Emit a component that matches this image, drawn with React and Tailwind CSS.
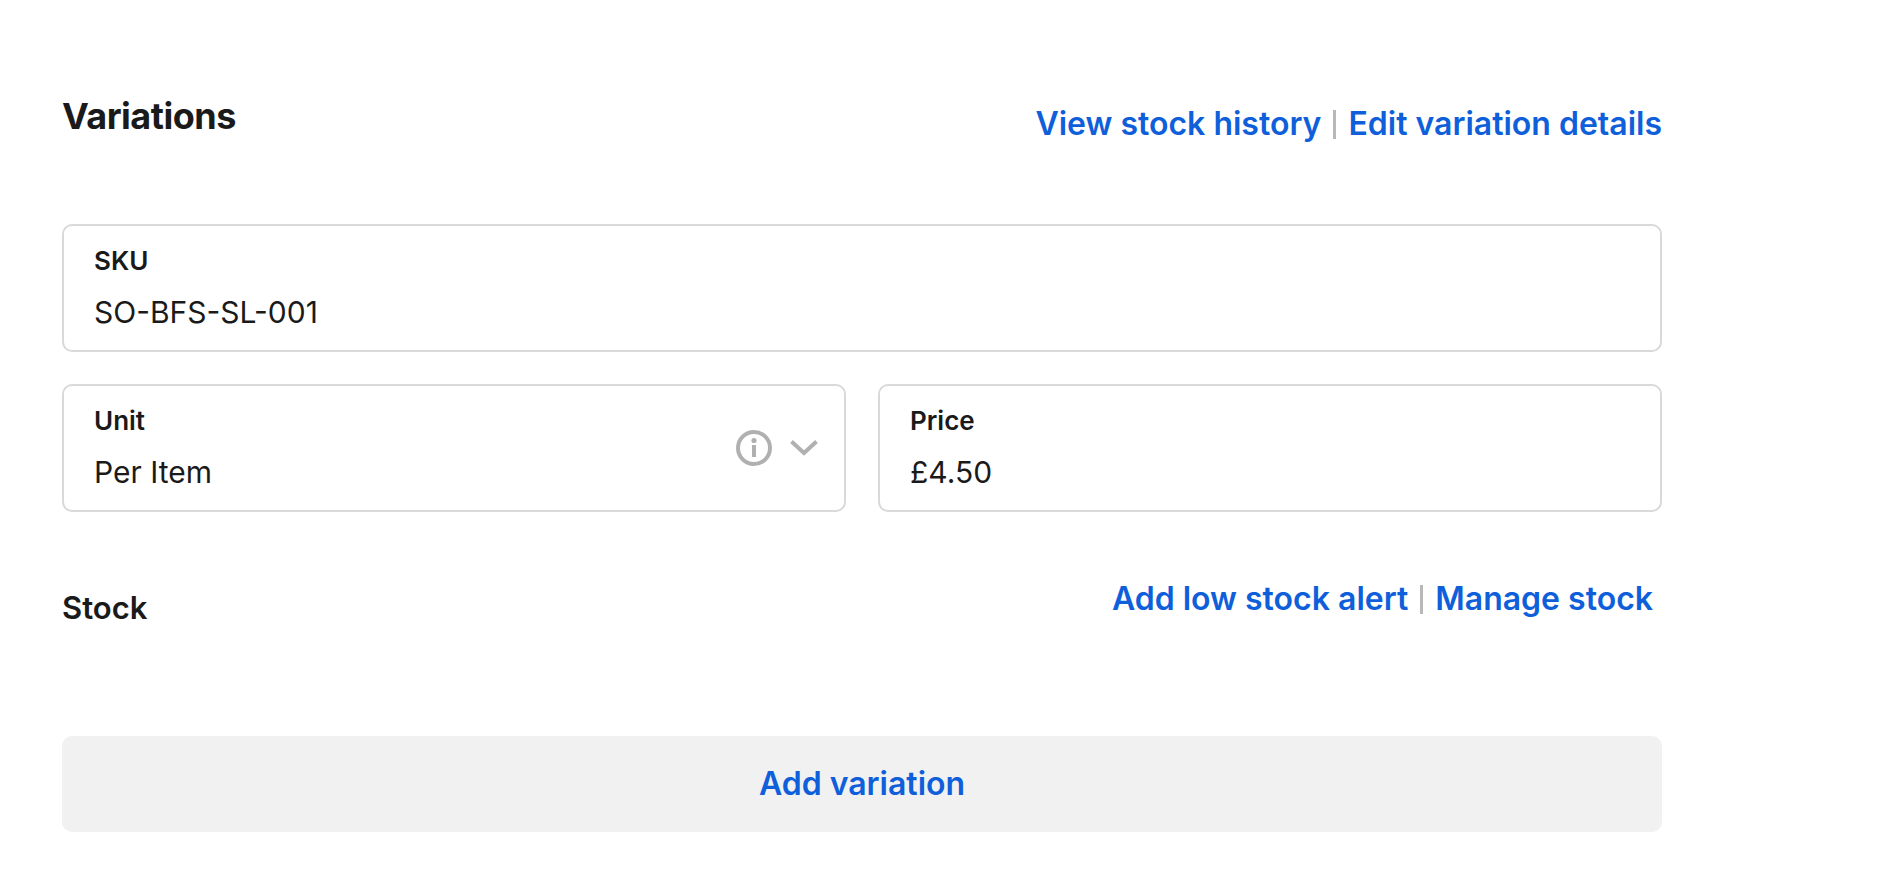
const FONT = "font-['Inter',sans-serif]";

const Field = ({ label, value, className = "", children }) => {
  return (
    <div
      className={`flex h-[128px] items-center justify-between rounded-[10px] border-2 border-[#d9d9d9] pl-[30px] pr-[26px] ${className}`}
    >
      <div className="flex flex-col pb-[4px]">
        <span className="text-[26px] leading-[36px] font-semibold text-[#1a1a1a]">
          {label}
        </span>
        <span className="mt-[15px] text-[30px] leading-[36px] text-[#1a1a1a]">
          {value}
        </span>
      </div>
      {children}
    </div>
  );
};

const InfoIcon = () => (
  <svg width="36" height="36" viewBox="0 0 36 36" fill="none">
    <circle cx="18" cy="18" r="16" stroke="#b0b0b0" strokeWidth="4" />
    <circle cx="18" cy="10.5" r="2.6" fill="#b0b0b0" />
    <rect x="16" y="15" width="4" height="12" fill="#b0b0b0" />
  </svg>
);

const ChevronIcon = () => (
  <svg width="28" height="18" viewBox="0 0 28 18" fill="none">
    <path d="M1.5 2.5 14 14 26.5 2.5" stroke="#b0b0b0" strokeWidth="4" />
  </svg>
);

const LinkPair = ({ first, second }) => (
  <div className="flex items-center text-[32px] leading-[40px] font-semibold text-[#0f5fdb]">
    <a href="#">{first}</a>
    <span className="mx-[12px] h-[29px] w-[3px] bg-[#b8b8b8]" />
    <a href="#">{second}</a>
  </div>
);

const App = () => {
  return (
    <div className={`h-[874px] bg-white pl-[62px] ${FONT}`}>
      <div className="w-[1600px] pt-[94px]">
        <div className="flex items-start justify-between">
          <h2 className="text-[36px] leading-[44px] font-bold tracking-[-0.5px] text-[#1a1a1a]">
            Variations
          </h2>
          <div className="mt-[10px]">
            <LinkPair first="View stock history" second="Edit variation details" />
          </div>
        </div>

        <Field label="SKU" value="SO-BFS-SL-001" className="mt-[80px]" />

        <div className="mt-[32px] grid grid-cols-[784px_784px] gap-[32px]">
          <Field label="Unit" value="Per Item">
            <div className="flex items-center gap-[18px]">
              <InfoIcon />
              <ChevronIcon />
            </div>
          </Field>
          <Field label="Price" value="£4.50" />
        </div>

        <div className="mt-[67px] flex items-start justify-between pr-[9px]">
          <span className="mt-[9px] text-[31px] leading-[40px] font-semibold text-[#1a1a1a]">
            Stock
          </span>
          <LinkPair first="Add low stock alert" second="Manage stock" />
        </div>

        <button
          type="button"
          className="mt-[108px] flex h-[96px] w-full items-center justify-center rounded-[10px] bg-[#f1f1f1] text-[32px] font-semibold text-[#0f5fdb]"
        >
          Add variation
        </button>
      </div>
    </div>
  );
};

export default App;
